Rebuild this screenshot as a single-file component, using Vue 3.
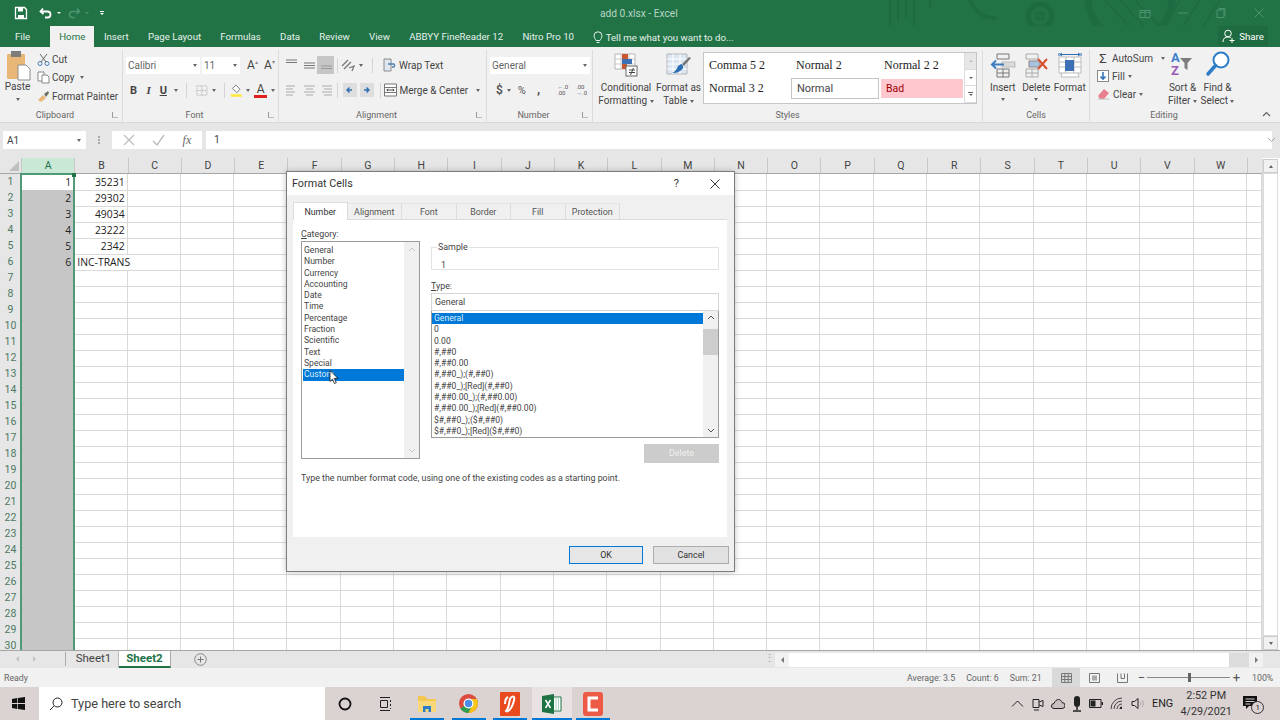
<script setup>
const tabs = ['Insert', 'Page Layout', 'Formulas', 'Data', 'Review', 'View', 'ABBYY FineReader 12', 'Nitro Pro 10']
const cols = 'ABCDEFGHIJKLMNOPQRSTUVW'.split('')
const rows = Array.from({ length: 30 }, (_, i) => i + 1)
const valoresB = { 1: '35231', 2: '29302', 3: '49034', 4: '23222', 5: '2342' }
const categorias = ['General', 'Number', 'Currency', 'Accounting', 'Date', 'Time', 'Percentage', 'Fraction', 'Scientific', 'Text', 'Special', 'Custom']
const formatos = ['General', '0', '0.00', '#,##0', '#,##0.00', '#,##0_);(#,##0)', '#,##0_);[Red](#,##0)', '#,##0.00_);(#,##0.00)', '#,##0.00_);[Red](#,##0.00)', '$#,##0_);($#,##0)', '$#,##0_);[Red]($#,##0)']
const dlgTabs = ['Number', 'Alignment', 'Font', 'Border', 'Fill', 'Protection']
</script>

<template>
  <div class="app">
    <!-- barra de titulo -->
    <div class="titlebar">
      <svg class="pattern" width="400" height="47" viewBox="0 0 400 47">
        <g fill="none" stroke="#1d6b40" stroke-width="2">
          <path d="M10 0v26M18 0v22M26 0v18M34 0v26M50 0v8" />
          <circle cx="160" cy="16" r="12" stroke-width="5" />
          <circle cx="160" cy="16" r="3" />
          <circle cx="250" cy="-2" r="42" stroke-width="7" />
          <path d="M225 0l40 44M240 0l40 44M255 0l30 32M300 0l-30 47M320 0l-30 47M340 0l-30 47" stroke-width="1.5" />
          <path d="M90 0c4 12 14 18 26 18" stroke-width="4" />
        </g>
      </svg>
      <div class="qat">
        <svg width="14" height="14" viewBox="0 0 14 14"><path d="M1.5 1.5h9l2 2v9h-11z" fill="none" stroke="#fff" stroke-width="1.3" /><path d="M4 1.5h5v4H4zM4 9h6v3.5H4z" fill="#fff" /></svg>
        <svg width="14" height="12" viewBox="0 0 14 12" class="undo"><path d="M4 1.5L1.5 4.5 4.5 7M2 4.5h6.5a3 3 0 0 1 0 6H6" fill="none" stroke="#fff" stroke-width="1.8" /></svg>
        <i class="caret white small"></i>
        <svg width="14" height="12" viewBox="0 0 14 12" class="redo"><path d="M10 1.5l2.5 3L9.5 7M12 4.5H5.5a3 3 0 0 0 0 6H8" fill="none" stroke="#4d9470" stroke-width="1.6" /></svg>
        <i class="caret dim small"></i>
        <div class="custom"><b></b><i class="caret white small"></i></div>
      </div>
      <span class="doc">add 0.xlsx - Excel</span>
      <div class="winbtns">
        <svg width="12" height="10" viewBox="0 0 12 10"><path d="M1 2.5h10v7H1zM1 4.500h10M6 2.500v7" fill="none" stroke="#4d9470" /></svg>
        <svg width="12" height="10" viewBox="0 0 12 10"><path d="M1 5h10" stroke="#4d9470" /></svg>
        <svg width="12" height="10" viewBox="0 0 12 10"><path d="M2 2h7v7.500H2zM4 2V.5h6v7H9" fill="none" stroke="#4d9470" /></svg>
        <svg width="12" height="10" viewBox="0 0 12 10"><path d="M1.500 0.500l9 9M10.500 0.500l-9 9" stroke="#4d9470" /></svg>
      </div>
    </div>
    <div class="tabbar">
      <span class="tab file">File</span>
      <span class="tab home">Home</span>
      <span v-for="t in tabs" :key="t" class="tab">{{ t }}</span>
      <span class="tell">
        <svg width="10" height="13" viewBox="0 0 10 13"><path d="M3 9.500C2.500 8 1 7 1 4.800a4 4 0 0 1 8 0C9 7 7.500 8 7 9.500zM3.500 11.500h3" fill="none" stroke="#e5f0ea" /></svg>
        Tell me what you want to do...
      </span>
      <span class="share">
        <svg width="14" height="14" viewBox="0 0 14 14"><circle cx="6" cy="4.500" r="3.300" fill="none" stroke="#fff" /><path d="M1 13c0-3.500 2-5 5-5 1 0 2 .2 2.800.7M10 9v5M7.500 11.500h5" fill="none" stroke="#fff" /></svg>
        Share
      </span>
    </div>

    <!-- cinta -->
    <div class="ribbon">
      <section class="grp clipboard">
        <div class="grp-body cb">
          <div class="paste">
            <svg width="26" height="34" viewBox="0 0 26 34"><rect x="1" y="4" width="18" height="25" rx="1" fill="#e8b778" /><rect x="5" y="1" width="10" height="6" fill="#7d7d7d" /><path d="M12 15h8l4 4v11H12z" fill="#fff" stroke="#8c8c8c" /></svg>
            <span>Paste</span>
            <i class="caret"></i>
          </div>
          <div class="cb-list">
            <div><svg width="13" height="13" viewBox="0 0 13 13"><circle cx="3" cy="10.500" r="2" fill="none" stroke="#4b7fb5" /><circle cx="10" cy="10.500" r="2" fill="none" stroke="#4b7fb5" /><path d="M4 9L10 1M9 9L3 1" stroke="#666" fill="none" /></svg>Cut</div>
            <div><svg width="13" height="13" viewBox="0 0 13 13"><path d="M1 1h6v9H1z" fill="#fff" stroke="#888" /><path d="M5 4h5l2 2v6H5z" fill="#fff" stroke="#888" /></svg>Copy <i class="caret mleft"></i></div>
            <div><svg width="13" height="13" viewBox="0 0 13 13"><path d="M1 10l5-5 3 3-5 4z" fill="#e8b778" /><path d="M7 4l4-3 1 2-3 4z" fill="#6e6e6e" /></svg>Format Painter</div>
          </div>
        </div>
        <div class="grp-label con">Clipboard<i class="launcher"></i></div>
      </section>

      <section class="grp font">
        <div class="grp-body stack">
          <div class="r r1">
            <div class="combo w74">Calibri<i class="caret"></i></div>
            <div class="combo w38">11<i class="caret"></i></div>
            <span class="big-a a1">A<sup>▴</sup></span>
            <span class="big-a">A<sup>▾</sup></span>
          </div>
          <div class="r r2">
            <b class="fmt w18">B</b><em class="fmt w17">I</em><u class="fmt w15">U</u><i class="caret m3"></i>
            <i class="sep"></i>
            <svg class="bordes" width="14" height="13" viewBox="0 0 14 13"><path d="M1 1h12v11H1zM1 6.500h12M7 1v11" fill="none" stroke="#b5b5b5" stroke-dasharray="2 1" /></svg>
            <i class="caret m3"></i>
            <i class="sep"></i>
            <svg width="15" height="15" viewBox="0 0 15 15"><path d="M7 1l5 5-4 4-5-5z" fill="#fff" stroke="#666" /><rect x="1" y="12" width="13" height="3" fill="#ffe93b" /></svg>
            <i class="caret m3"></i>
            <span class="colora">A</span>
            <i class="caret m3"></i>
          </div>
        </div>
        <div class="grp-label con">Font<i class="launcher"></i></div>
      </section>

      <section class="grp align">
        <div class="grp-body stack">
          <div class="r r1 ar">
            <svg class="al" width="14" height="14" viewBox="0 0 14 14"><path d="M2 2h11M2 4.500h11" stroke="#777" /></svg>
            <svg class="al" width="14" height="14" viewBox="0 0 14 14"><path d="M2 5h11M2 7.500h11M2 10h11" stroke="#777" /></svg>
            <span class="al on"><svg width="14" height="14" viewBox="0 0 14 14"><path d="M2 8h11M2 10.500h11" stroke="#999" /></svg></span>
            <i class="sep s2"></i>
            <svg width="14" height="14" viewBox="0 0 14 14"><path d="M1 8l6-6M3 11l7-7M8 10l5-2-2 5" fill="none" stroke="#777" stroke-width="1.300" /></svg>
            <i class="caret m3"></i>
            <i class="sep s3"></i>
            <svg width="13" height="14" viewBox="0 0 13 14"><path d="M1 1h7v12H1z" fill="#dfe7f1" stroke="#8a8a8a" /><path d="M5 6h6a2 2 0 0 1 0 3H9" fill="none" stroke="#4b7fb5" stroke-width="1.300" /></svg>
            <span class="txt">Wrap Text</span>
          </div>
          <div class="r r2 ar">
            <svg class="al" width="14" height="14" viewBox="0 0 14 14"><path d="M2 3h9M2 6h7M2 9h9M2 12h7" stroke="#c2c2c2" stroke-width="1.500" /></svg>
            <svg class="al" width="14" height="14" viewBox="0 0 14 14"><path d="M2 3h11M4 6h7M2 9h11M4 12h7" stroke="#c2c2c2" stroke-width="1.500" /></svg>
            <svg class="al" width="14" height="14" viewBox="0 0 14 14"><path d="M3 3h10M5 6h8M3 9h10M5 12h8" stroke="#c2c2c2" stroke-width="1.500" /></svg>
            <i class="sep s4"></i>
            <svg class="ind" width="14" height="14" viewBox="0 0 14 14"><rect width="14" height="14" fill="#dedede" /><path d="M9 7H4M6.500 4.500L4 7l2.500 2.500" fill="none" stroke="#2d6db3" stroke-width="1.400" /></svg>
            <svg class="ind" width="14" height="14" viewBox="0 0 14 14"><rect width="14" height="14" fill="#dedede" /><path d="M4 7h5M6.500 4.500L9 7 6.500 9.500" fill="none" stroke="#2d6db3" stroke-width="1.400" /></svg>
            <i class="sep s5"></i>
            <svg width="13" height="14" viewBox="0 0 13 14"><path d="M.5 1h12v12H.5zM.5 4.500h12M.5 9.500h12" fill="#fff" stroke="#777" /><path d="M3 7h7M4 5.800L2.800 7 4 8.200M9 5.800L10.200 7 9 8.200" fill="none" stroke="#444" /></svg>
            <span class="txt">Merge &amp; Center</span>
            <i class="caret m8"></i>
          </div>
        </div>
        <div class="grp-label con">Alignment<i class="launcher"></i></div>
      </section>

      <section class="grp number">
        <div class="grp-body stack">
          <div class="r r1"><div class="combo w100">General<i class="caret"></i></div></div>
          <div class="r r2 nr">
            <span class="dollar">$</span><i class="caret m3"></i>
            <span class="pct">%</span>
            <span class="comma">,</span>
            <i class="sep s6"></i>
            <span class="dec"><u>←</u>.0<br />.00</span>
            <span class="dec">.00<br /><u>→</u>.0</span>
          </div>
        </div>
        <div class="grp-label con">Number<i class="launcher"></i></div>
      </section>

      <section class="grp styles">
        <div class="grp-body st">
          <div class="bigbtn w57">
            <svg width="24" height="24" viewBox="0 0 24 24"><path d="M1 1h20v15H1z" fill="#fff" stroke="#b5b5b5" /><path d="M1 6h20M1 11h20M7 1v15M15 1v15" stroke="#c9c9c9" /><rect x="8" y="1" width="6" height="5" fill="#c8562e" /><rect x="8" y="6" width="10" height="5" fill="#3e70b5" /><rect x="8" y="11" width="5" height="5" fill="#c8562e" /><rect x="12" y="13" width="11" height="10" fill="#fff" stroke="#666" /><path d="M15 17h6M15 19.500h6M19.500 15l-3 7" stroke="#444" /></svg>
            <span>Conditional</span><span>Formatting <i class="caret"></i></span>
          </div>
          <div class="bigbtn w50">
            <svg width="26" height="24" viewBox="0 0 26 24"><path d="M1 1h20v20H1z" fill="#dbe6f3" stroke="#b5b5b5" /><path d="M1 6h20M1 11h20M1 16h20M7 1v20M14 1v20" stroke="#fff" /><path d="M25 5l-7 8-2-2 7-7z" fill="#777" /><path d="M15 11c3 1 3 5-1 7-3 2-6 2-8 2 3-1 5-4 6-7z" fill="#2d6db3" /></svg>
            <span>Format as</span><span>Table <i class="caret"></i></span>
          </div>
          <div class="gallery">
            <div class="gal-grid">
              <span class="ser">Comma 5 2</span><span class="ser">Normal 2</span><span class="ser">Normal 2 2</span>
              <span class="ser">Normal 3 2</span><span class="norm">Normal</span><span class="bad">Bad</span>
            </div>
            <div class="gal-scroll">
              <span class="off"><i class="caret up"></i></span><span><i class="caret"></i></span><span class="more"><b></b><i class="caret"></i></span>
            </div>
          </div>
        </div>
        <div class="grp-label">Styles</div>
      </section>

      <section class="grp cells">
        <div class="grp-body cl">
          <div class="cellbtn">
            <svg width="26" height="26" viewBox="0 0 26 26"><path d="M7 2h12v5H7zM7 17h12v8H7zM13 17v8M7 21h12" fill="none" stroke="#777" /><rect x="12" y="10" width="13" height="5" fill="#dadada" stroke="#bbb" /><path d="M14 12.500H2M6 8.500l-4 4 4 4" fill="none" stroke="#3f7dbd" stroke-width="2" /></svg>
            <span>Insert</span><i class="caret"></i>
          </div>
          <div class="cellbtn">
            <svg width="26" height="26" viewBox="0 0 26 26"><path d="M3 2h12v5H3zM3 17h12v8H3zM9 17v8M3 21h12" fill="none" stroke="#aaa" /><rect x="6" y="9" width="11" height="6" fill="#a9c4e0" stroke="#888" /><path d="M15 7l9 10M24 7l-9 10" stroke="#d9502e" stroke-width="2" /></svg>
            <span>Delete</span><i class="caret"></i>
          </div>
          <div class="cellbtn">
            <svg width="24" height="26" viewBox="0 0 24 26"><path d="M1 5h22v16H1zM1 10h22M1 15h22M8 5v16M16 5v16M4 21l-1 4h18l-1-4" fill="#fff" stroke="#bbb" /><rect x="7" y="8" width="9" height="11" fill="#3e70b5" /><path d="M1 1v3M23 1v3M2 2.500h20M4 1L2 2.500 4 4M20 1l2 1.500L20 4" fill="none" stroke="#2d6db3" /></svg>
            <span>Format</span><i class="caret"></i>
          </div>
        </div>
        <div class="grp-label">Cells</div>
      </section>

      <section class="grp editing">
        <div class="grp-body ed">
          <div class="ed-list">
            <div><span class="sigma">Σ</span>AutoSum <i class="caret mleft2"></i></div>
            <div><svg width="12" height="12" viewBox="0 0 12 12"><rect x=".5" y=".5" width="11" height="11" fill="#fff" stroke="#888" /><path d="M6 2v7M3.500 6.500L6 9.200 8.500 6.500" fill="none" stroke="#2d6db3" stroke-width="1.500" /></svg>Fill <i class="caret"></i></div>
            <div><svg width="13" height="12" viewBox="0 0 13 12"><path d="M1 8l6-7 5 4-5 6H3z" fill="#e8808f" /><path d="M1 11h11" stroke="#bbb" /></svg>Clear <i class="caret"></i></div>
          </div>
          <div class="bigbtn w35 sort">
            <svg width="26" height="26" viewBox="0 0 26 26">
              <text x="1" y="11" class="az a">A</text><text x="1" y="24" class="az z">Z</text>
              <path d="M10 7h12l-4.500 5v7l-3-2v-5z" fill="#7d7d7d" />
            </svg>
            <span>Sort &amp;</span><span>Filter <i class="caret"></i></span>
          </div>
          <div class="bigbtn w35 find">
            <svg width="26" height="26" viewBox="0 0 26 26"><circle cx="16" cy="9" r="7.500" fill="#fff" stroke="#2d7cc7" stroke-width="2" /><path d="M10.500 14.500L3 23" stroke="#2d7cc7" stroke-width="3.500" stroke-linecap="round" /></svg>
            <span>Find &amp;</span><span>Select <i class="caret"></i></span>
          </div>
        </div>
        <div class="grp-label">Editing</div>
      </section>
      <svg class="collapse" width="9" height="6" viewBox="0 0 9 6"><path d="M1 5l3.500-3.500L8 5" fill="none" stroke="#666" stroke-width="1.200" /></svg>
    </div>

    <!-- barra de formulas -->
    <div class="fbar">
      <div class="namebox">A1<i class="caret"></i></div>
      <div class="grip"></div>
      <div class="fbtns">
        <svg width="12" height="12" viewBox="0 0 12 12"><path d="M1 1l10 10M11 1L1 11" stroke="#bdbdbd" stroke-width="1.200" /></svg>
        <svg width="13" height="12" viewBox="0 0 13 12"><path d="M1 7l4 4 7-10" fill="none" stroke="#bdbdbd" stroke-width="1.400" /></svg>
        <span class="fx">fx</span>
      </div>
      <div class="finput">1</div>
      <svg class="fdown" width="9" height="6" viewBox="0 0 9 6"><path d="M1 1l3.500 3.500L8 1" fill="none" stroke="#a8a8a8" /></svg>
    </div>

    <!-- hoja -->
    <div class="sheet">
      <div class="grid">
        <div class="hdr">
          <div class="corner"><i></i></div>
          <div v-for="c in cols" :key="c" class="colh" :class="{ act: c === 'A' }">{{ c }}</div>
          <div class="colh"></div>
        </div>
        <div v-for="r in rows" :key="r" class="row">
          <div class="rowh">{{ r }}</div>
          <div class="cell num" :class="{ gris: r > 1 }"><template v-if="r <= 6">{{ r }}</template></div>
          <div class="cell num b" :class="{ largo: r === 6 }">{{ r === 6 ? 'INC-TRANS' : valoresB[r] }}</div>
          <div v-for="c in cols.slice(2)" :key="c" class="cell"></div>
          <div class="cell"></div>
        </div>
        <div class="selbox"><i></i></div>
      </div>
      <div class="vscroll">
        <span><i class="caret up"></i></span>
        <b></b>
        <span><i class="caret"></i></span>
      </div>
    </div>

    <!-- pestañas de hojas -->
    <div class="sheetbar">
      <div class="navs"><i class="tri l"></i><i class="tri r"></i></div>
      <div class="stab">Sheet1</div>
      <div class="stab on">Sheet2</div>
      <svg class="plus" width="13" height="13" viewBox="0 0 13 13"><circle cx="6.500" cy="6.500" r="5.800" fill="none" stroke="#888" /><path d="M6.500 3.500v6M3.500 6.500h6" stroke="#777" /></svg>
      <div class="dots">⋮</div>
      <div class="hscroll">
        <span class="h-end"><i class="tri l dark"></i></span>
        <b></b>
        <span class="h-end"><i class="tri r dark"></i></span>
      </div>
    </div>

    <!-- barra de estado -->
    <div class="status">
      <span class="ready">Ready</span>
      <div class="stats"><span>Average: 3.5</span><span>Count: 6</span><span>Sum: 21</span></div>
      <div class="views">
        <span class="on"><svg width="11" height="10" viewBox="0 0 11 10"><path d="M.5.500h10v9H.5zM.5 3.500h10M.5 6.500h10M3.800.500v9M7.200.500v9" fill="none" stroke="#777" /></svg></span>
        <span><svg width="11" height="10" viewBox="0 0 11 10"><path d="M.5.500h10v9H.5z" fill="none" stroke="#777" /><rect x="3" y="2.500" width="5" height="5" fill="#aaa" /></svg></span>
        <span><svg width="11" height="10" viewBox="0 0 11 10"><path d="M.5.500v9h10v-9M4 .500v5h3.500v-5" fill="none" stroke="#777" /></svg></span>
      </div>
      <div class="zoom">
        <span class="zb">−</span>
        <div class="slider"><i></i></div>
        <span class="zb">+</span>
      </div>
      <span class="pc">100%</span>
    </div>

    <!-- barra de tareas -->
    <div class="taskbar">
      <div class="start">
        <svg width="13" height="13" viewBox="0 0 13 13"><path d="M0 1.900L5.300 1.100V6H0zM6 1L13 0V6H6zM0 7h5.300v4.900L0 11.100zM6 7h7v6L6 12z" fill="#111" /></svg>
      </div>
      <div class="search">
        <svg width="14" height="14" viewBox="0 0 14 14"><circle cx="8.500" cy="5.500" r="4.500" fill="none" stroke="#222" /><path d="M5.200 8.800L1 13" stroke="#222" /></svg>
        <span>Type here to search</span>
      </div>
      <div class="tb-app plain"><svg width="14" height="14" viewBox="0 0 14 14"><circle cx="7" cy="7" r="5.500" fill="none" stroke="#111" stroke-width="1.800" /></svg></div>
      <div class="tb-app plain"><svg width="14" height="14" viewBox="0 0 14 14"><path d="M2 .500h10M2 13.500h10M2.500 3.500h7v7h-7zM12.500 3v2M12.500 7v2M12.500 11v1" fill="none" stroke="#222" /></svg></div>
      <div class="apps">
        <div class="tb-app run"><svg width="18" height="18" viewBox="0 0 18 18"><path d="M0 1h7l2 3h9v13H0z" fill="#f3c850" /><rect y="6" width="18" height="11" fill="#f8d878" /><path d="M5 17v-6h8v6h-2.500v-3h-3v3z" fill="#2d7cc7" /></svg></div>
        <div class="tb-app run"><svg width="19" height="19" viewBox="0 0 19 19"><circle cx="9.500" cy="9.500" r="9.500" fill="#dd4b3e" /><path d="M9.500 9.500L1.300 14.200A9.500 9.500 0 0 0 9.500 19l4.600-8z" fill="#2f9e4f" /><path d="M9.500 5h8.200a9.500 9.500 0 0 1-8.200 14l4.600-9.500z" fill="#f5c518" /><circle cx="9.500" cy="9.500" r="4.400" fill="#4a8ce8" stroke="#fff" stroke-width="1.300" /></svg></div>
        <div class="tb-app run"><svg width="20" height="24" viewBox="0 0 20 24"><rect width="20" height="24" rx="1" fill="#e8491d" /><path d="M6 19c3-3 3-8 4-12 1-2 3-3 4-2s-1 8-3 11-4 4-5 3zM5 12c0-3 1-6 3-7" fill="none" stroke="#fff" stroke-width="2" /></svg></div>
        <div class="tb-app run act"><svg width="20" height="20" viewBox="0 0 20 20"><path d="M12 3h7v14h-7" fill="#fff" stroke="#1f7244" /><path d="M14 3v14M16.500 3v14" stroke="#a9cdb8" /><path d="M0 2l12-2v20L0 18z" fill="#1f7244" /><path d="M3.500 6l5 8M8.500 6l-5 8" stroke="#fff" stroke-width="1.500" /></svg></div>
        <div class="tb-app run"><svg width="20" height="24" viewBox="0 0 20 24"><rect width="20" height="24" rx="3" fill="#ed5a45" /><path d="M15 6H6v12h9" fill="none" stroke="#fff" stroke-width="3" /></svg></div>
      </div>
      <div class="tray">
        <svg width="13" height="7" viewBox="0 0 13 7"><path d="M1 6.500l5.500-5.500L12 6.500" fill="none" stroke="#222" /></svg>
        <svg width="13" height="14" viewBox="0 0 13 14"><path d="M2 2.500h6v8H2zM8 5l4-1.500v6L8 8M3 13h5" fill="none" stroke="#222" /></svg>
        <svg width="14" height="10" viewBox="0 0 14 10"><path d="M3 9.500a2.500 2.500 0 0 1 0-5C4 2 5.500.500 7.500.500c2 0 3 1.500 3.500 3a3 3 0 0 1 0 6z" fill="#c8c0bf" stroke="#222" /></svg>
        <svg width="10" height="16" viewBox="0 0 10 16"><rect x="2" y="0" width="6" height="11" rx="3" fill="#222" /><path d="M5 11v3M1 15h8" stroke="#222" stroke-width="1.500" /></svg>
        <svg width="14" height="9" viewBox="0 0 14 9"><path d="M.5.500h11.500v8H.5z" fill="none" stroke="#222" /><rect x="1.500" y="1.500" width="5" height="6" fill="#222" /><rect x="12.500" y="3" width="1.500" height="3" fill="#222" /></svg>
        <svg width="14" height="13" viewBox="0 0 14 13"><path d="M1 12a11 11 0 0 1 11-11M4 12a8 8 0 0 1 8-8M7 12a5 5 0 0 1 5-5" fill="none" stroke="#444" /><path d="M9.500 12a2.500 2.500 0 0 1 2.500-2.500V12z" fill="#222" /></svg>
        <svg width="14" height="13" viewBox="0 0 14 13"><path d="M1 4.500h2.500L7 1.500v10l-3.500-3H1z" fill="none" stroke="#222" /><path d="M9 4.500a3 3 0 0 1 0 4M11 3a5 5 0 0 1 0 7" fill="none" stroke="#aaa" /></svg>
        <span class="eng">ENG</span>
        <div class="clock"><span>2:52 PM</span><span>4/29/2021</span></div>
        <div class="notif">
          <svg width="14" height="13" viewBox="0 0 14 13"><path d="M0 0h14v10H6l-3 3v-3H0z" fill="#111" /><path d="M2.500 3h9M2.500 5.500h9M2.500 8h5" stroke="#d6cfce" /></svg>
          <span>1</span>
        </div>
      </div>
    </div>

    <!-- dialogo -->
    <div class="dialog">
      <div class="dlg-title">
        <span>Format Cells</span>
        <span class="q">?</span>
        <svg width="10" height="10" viewBox="0 0 10 10"><path d="M.5.500l9 9M9.500.500l-9 9" stroke="#333" /></svg>
      </div>
      <div class="dlg-tabs">
        <span v-for="(t, i) in dlgTabs" :key="t" :class="{ on: i === 0 }">{{ t }}</span>
      </div>
      <div class="dlg-panel">
        <div class="dlg-cols">
          <div class="cat">
            <label><u>C</u>ategory:</label>
            <div class="catbox">
              <div class="catlist">
                <div v-for="c in categorias" :key="c" class="li" :class="{ sel: c === 'Custom' }">{{ c }}</div>
              </div>
              <div class="sb off">
                <svg width="8" height="5" viewBox="0 0 8 5"><path d="M1 4l3-3 3 3" fill="none" stroke="#c8c8c8" /></svg>
                <svg width="8" height="5" viewBox="0 0 8 5"><path d="M1 1l3 3 3-3" fill="none" stroke="#c8c8c8" /></svg>
              </div>
            </div>
          </div>
          <div class="der">
            <fieldset class="sample">
              <legend>Sample</legend>
              <div>1</div>
            </fieldset>
            <label class="tl"><u>T</u>ype:</label>
            <div class="tinput">General</div>
            <div class="tbox">
              <div class="tlist">
                <div v-for="(f, i) in formatos" :key="f" class="li" :class="{ sel: i === 0 }">{{ f }}</div>
              </div>
              <div class="sb">
                <svg width="8" height="5" viewBox="0 0 8 5"><path d="M1 4l3-3 3 3" fill="none" stroke="#555" /></svg>
                <b></b>
                <svg class="abajo" width="8" height="5" viewBox="0 0 8 5"><path d="M1 1l3 3 3-3" fill="none" stroke="#555" /></svg>
              </div>
            </div>
            <div class="delrow"><span class="del">Delete</span></div>
          </div>
        </div>
        <p class="desc">Type the number format code, using one of the existing codes as a starting point.</p>
      </div>
      <div class="dlg-foot">
        <span class="btn ok">OK</span>
        <span class="btn">Cancel</span>
      </div>
    </div>

    <svg class="cursor" width="10" height="14" viewBox="0 0 10 14"><path d="M1 .500v11l2.500-2.300L5.500 13.500l1.800-.8-2-4.300H9z" fill="#fff" stroke="#111" stroke-width=".8" /></svg>
  </div>
</template>

<style scoped>
.app { position: relative; width: 1280px; height: 720px; overflow: hidden; display: flex; flex-direction: column; background: #f1f1f1; color: #444; font-family: Roboto, "Open Sans", sans-serif; font-size: 10px; }
.caret { display: inline-block; width: 0; height: 0; border-left: 2.5px solid transparent; border-right: 2.5px solid transparent; border-top: 3px solid #666; vertical-align: middle; }
.caret.up { border-top: 0; border-bottom: 3px solid #666; }
.caret.white { border-top-color: #fff; }
.caret.dim { border-top-color: #4d9470; }
.caret.small { border-left-width: 2px; border-right-width: 2px; border-top-width: 2.5px; }

.titlebar { position: relative; height: 26px; background: #217346; color: #cfe3d8; display: flex; align-items: center; flex: none; }
.pattern { position: absolute; right: 0; top: 0; z-index: 0; }
.qat { display: flex; align-items: center; padding-left: 14px; position: relative; }
.undo { margin-left: 11px; }
.qat .caret { margin-left: 4px; }
.redo { margin-left: 6px; }
.custom { margin-left: 11px; display: flex; flex-direction: column; align-items: center; gap: 1px; }
.custom b { width: 4px; height: 1px; background: #fff; }
.custom .caret { margin: 0; }
.doc { position: absolute; left: 600px; top: 8px; font-size: 10.200px; color: #b8d4c5; }
.winbtns { position: absolute; right: 15px; top: 8px; display: flex; gap: 26px; }

.tabbar { position: relative; height: 21px; background: #217346; display: flex; align-items: center; flex: none; color: #e5f0ea; font-size: 9.700px; padding-left: 5px; }
.tab { padding: 0 9.600px; line-height: 22px; white-space: nowrap; }
.tab.file { padding: 0 10px; }
.tab.home { background: #f1f1f1; color: #217346; height: 21px; margin-left: 10px; padding: 0 9px; }
.tell { margin-left: 9px; display: flex; align-items: center; gap: 3px; white-space: nowrap; padding-top: 1px; }
.share { position: absolute; left: 1218px; top: 0; width: 50px; height: 20px; background: #1f6b41; color: #fff; display: flex; align-items: center; justify-content: center; gap: 3px; }

.ribbon { position: relative; flex: none; height: 75px; background: #f1f1f1; display: flex; }
.grp { display: flex; flex-direction: column; border-right: 1px solid #dcdcdc; position: relative; margin-top: 3px; height: 72px; box-sizing: border-box; flex: none; white-space: nowrap; }
.grp-body { height: 58px; flex: none; }
.grp-label { height: 14px; line-height: 14px; text-align: center; font-size: 9px; color: #666; position: relative; box-sizing: border-box; }
.grp-label.con { padding-right: 12px; }
.launcher { position: absolute; right: 4px; top: 4px; width: 5px; height: 5px; border-left: 1px solid #999; border-bottom: 1px solid #bbb; }
.clipboard { width: 123px; }
.font { width: 156px; }
.align { width: 208px; }
.number { width: 106px; }
.styles { width: 390px; }
.cells { width: 107px; }
.editing { width: 148px; border-right: 0; }
.cb { display: flex; }
.paste { width: 35px; display: flex; flex-direction: column; align-items: center; }
.paste svg { margin-left: 3px; }
.paste span { line-height: 11px; margin-top: -3px; }
.paste .caret { margin-top: 6px; }
.cb-list { display: flex; flex-direction: column; margin-left: 2px; }
.cb-list div { height: 18.500px; display: flex; align-items: center; gap: 2px; }
.mleft { margin-left: 3px; }
.stack { display: flex; flex-direction: column; padding: 6px 0 0 3px; box-sizing: border-box; }
.r { display: flex; align-items: center; }
.r1 { height: 18px; }
.r2 { height: 18px; margin-top: 7px; }
.combo { height: 17px; background: #fff; display: flex; align-items: center; justify-content: space-between; padding: 0 3px 0 2px; box-sizing: border-box; margin-right: 2px; color: #666; font-size: 10px; }
.w74 { width: 74px; } .w38 { width: 38px; } .w100 { width: 100px; }
.big-a { font-size: 12px; width: 17px; text-align: center; }
.a1 { margin-left: 2px; }
.big-a sup { font-size: 6px; line-height: 0; color: #888; }
.fmt { text-align: center; font-size: 11px; font-family: "Liberation Serif", serif; color: #444; }
.r2 b.fmt, .r2 u.fmt { font-family: Roboto, sans-serif; font-weight: 700; }
.w18 { width: 18px; margin-left: 0; } .w17 { width: 18px; font-weight: 700; } .w15 { width: 17px; }
.m3 { margin: 0 3px 0 4px; }
.sep { width: 1px; height: 15px; background: #d4d4d4; margin: 0 5px; }
.bordes { margin-left: 4px; }
.colora { position: relative; width: 15px; height: 15px; text-align: center; font-size: 12px; line-height: 12px; color: #444; border-bottom: 3px solid #e01e1e; box-sizing: border-box; margin-left: 1px; }
.ar { padding-left: 2px; }
.al { width: 14px; margin-right: 3.500px; }
.al.on { width: 17px; height: 18px; background: #c6c6c6; margin-right: 0; display: flex; align-items: center; justify-content: center; margin-left: -2px; }
.s2 { margin: 0 3px 0 3px; }
.s3 { margin: 0 10px 0 6px; }
.s4 { margin: 0 5px 0 0; }
.ind { margin-right: 3px; }
.s5 { margin: 0 3px 0 3px; }
.txt { margin-left: 3px; }
.m8 { margin-left: 8px; }
.nr { padding-left: 6px; color: #555; }
.dollar { font-size: 12px; font-weight: 600; }
.pct { font-size: 11px; margin-left: 4px; }
.comma { font-size: 13px; font-weight: 700; margin-left: 11px; line-height: 10px; }
.s6 { margin: 0 8px 0 9px; }
.dec { font-size: 6px; line-height: 6px; margin-right: 8px; }
.dec u { text-decoration: none; color: #2d6db3; }
.st { display: flex; }
.bigbtn { display: flex; flex-direction: column; align-items: center; line-height: 13px; }
.bigbtn svg { margin: 3px 0 4px; height: 24px; }
.bigbtn span { white-space: nowrap; }
.w57 { width: 56px; margin-left: 5px; }
.w50 { width: 49px; }
.gallery { margin-top: 2px; height: 52px; width: 274px; background: #fff; border: 1px solid #c6c6c6; box-sizing: border-box; display: flex; }
.gal-grid { flex: 1; display: grid; grid-template-columns: 87px 88px 85px; grid-template-rows: 24px 22px; align-items: center; }
.gal-grid span { padding-left: 5px; }
.gal-grid .ser { font-family: "Liberation Serif", serif; color: #222; font-size: 12px; }
.gal-grid .norm { border: 1.500px solid #c4c4c4; height: 21px; line-height: 19px; box-sizing: border-box; color: #444; font-size: 11px; background: #fff; }
.gal-grid .bad { background: #ffc7ce; color: #9c0006; height: 19px; line-height: 19px; font-size: 10.500px; margin: 0 1px 0 2px; }
.gal-scroll { width: 11px; display: flex; flex-direction: column; border-left: 1px solid #dcdcdc; }
.gal-scroll span { flex: 1; display: flex; flex-direction: column; align-items: center; justify-content: center; gap: 1px; border-bottom: 1px solid #dcdcdc; background: #fff; }
.gal-scroll .off { background: #e6e6e6; }
.gal-scroll b { width: 5px; height: 1px; background: #666; }
.gal-scroll .caret { border-left-width: 2px; border-right-width: 2px; border-top-width: 2px; }
.gal-scroll .caret.up { border-bottom-width: 2px; border-top-width: 0; border-bottom-color: #bbb; }
.cl { display: flex; padding-left: 3px; }
.cellbtn { width: 33.500px; display: flex; flex-direction: column; align-items: center; line-height: 13px; }
.cellbtn svg { height: 26px; margin: 2px 0 3px; }
.cellbtn .caret { margin-top: 4px; }
.ed { display: flex; }
.ed-list { width: 75px; display: flex; flex-direction: column; margin-top: -1px; padding-left: 7px; box-sizing: border-box; }
.ed-list div { height: 18px; display: flex; align-items: center; gap: 3px; white-space: nowrap; }
.sigma { width: 12px; font-size: 13px; text-align: center; color: #444; }
.mleft2 { margin-left: 5px; }
.w35 { width: 35px; }
.bigbtn.sort svg, .bigbtn.find svg { height: 26px; margin: 1px 0 4px; }
.az { font-size: 13px; font-weight: 700; font-family: Roboto, sans-serif; }
.az.a { fill: #3d7fc8; }
.az.z { fill: #9b59b6; }
.collapse { position: absolute; right: 9px; top: 64px; }

.fbar { position: relative; flex: none; height: 36px; background: #e6e6e6; border-top: 1px solid #d8d8d8; box-sizing: border-box; display: flex; padding: 8px 0 0 3px; color: #444; }
.namebox { width: 83px; height: 18px; background: #fff; box-sizing: border-box; display: flex; align-items: center; justify-content: space-between; padding: 0 5px 0 4px; }
.grip { width: 26px; height: 18px; position: relative; }
.grip::after { content: ""; position: absolute; left: 12px; top: 5px; width: 2px; height: 8px; background: repeating-linear-gradient(#aaa 0 2px, transparent 2px 3px); }
.fbtns { width: 90px; height: 18px; background: #fff; display: flex; align-items: center; justify-content: space-around; padding: 0 2px; box-sizing: border-box; }
.fx { font-family: "Liberation Serif", serif; font-style: italic; font-size: 12px; color: #666; }
.finput { margin-left: 4px; width: 1066px; height: 18px; line-height: 18px; background: #fff; padding-left: 8px; box-sizing: border-box; font-size: 10.500px; }
.fdown { position: absolute; right: 4px; top: 14px; }

.sheet { flex: 1; min-height: 0; display: flex; background: #fff; }
.grid { position: relative; width: 1263px; overflow: hidden; background: #fff; }
.hdr, .row { display: grid; grid-template-columns: 21px repeat(23, 53.300px) 1fr; }
.hdr { height: 16px; background: #e6e6e6; border-bottom: 1px solid #a6a6a6; box-sizing: border-box; }
.corner { position: relative; }
.corner i { position: absolute; right: 2px; bottom: 2px; width: 0; height: 0; border-left: 10px solid transparent; border-bottom: 10px solid #c0c0c0; }
.colh { text-align: center; line-height: 15px; border-left: 1px solid #c8c8c8; font-size: 10.500px; color: #444; }
.colh.act { background: #c9e8d6; color: #217346; }
.row { height: 16px; }
.rowh { background: #e6e6e6; color: #4c7a62; text-align: center; line-height: 16px; font-size: 10.500px; border-bottom: 1px solid #c8c8c8; box-sizing: border-box; }
.cell { border-right: 1px solid #d9d9d9; border-bottom: 1px solid #d9d9d9; box-sizing: border-box; min-width: 0; line-height: 16px; font-family: "Open Sans", sans-serif; font-size: 10.400px; color: #222; white-space: nowrap; }
.num { text-align: right; padding-right: 2px; }
.gris { background: #c6c6c6; border-color: #bcbcbc; }
.largo { text-align: left; padding-left: 3px; border-right-color: transparent; }
.selbox { position: absolute; left: 20px; top: 15px; bottom: -2px; width: 55px; border: 2px solid #4f9a75; box-sizing: border-box; pointer-events: none; }
.selbox i { position: absolute; right: -3px; top: -2px; width: 4px; height: 4px; background: #217346; }
.vscroll { width: 15px; margin: 1px 2px 0 0; display: flex; flex-direction: column; background: #f1f1f1; border-left: 1px solid #dcdcdc; box-sizing: content-box; }
.vscroll span { height: 14px; display: flex; align-items: center; justify-content: center; background: #f1f1f1; border: 1px solid #ccc; box-sizing: border-box; }
.vscroll b { flex: 1; background: #fff; border: 1px solid #ddd; }

.sheetbar { position: relative; flex: none; height: 18px; background: #e6e6e6; border-top: 1px solid #a6a6a6; box-sizing: border-box; display: flex; align-items: stretch; }
.navs { width: 66px; border-right: 1px solid #aaa; box-sizing: border-box; display: flex; align-items: center; gap: 14px; padding-left: 16px; margin: 1px 3px 2px 0; }
.tri { display: inline-block; width: 0; height: 0; border-top: 3px solid transparent; border-bottom: 3px solid transparent; }
.tri.l { border-right: 3px solid #c2c2c2; }
.tri.r { border-left: 3px solid #c2c2c2; }
.tri.dark.l { border-right-color: #777; }
.tri.dark.r { border-left-color: #777; }
.stab { width: 50px; text-align: center; line-height: 14px; font-size: 11.500px; color: #444; border-right: 1px solid #bbb; box-sizing: border-box; }
.stab.on { width: 52px; background: #fff; color: #217346; font-weight: 700; border-bottom: 2px solid #217346; border-right: 1px solid #aaa; height: 17px; }
.plus { margin: 2px 0 0 23px; }
.dots { position: absolute; left: 764px; top: 1px; color: #999; font-size: 11px; line-height: 14px; }
.hscroll { position: absolute; left: 775px; top: 2px; width: 488px; height: 14px; display: flex; background: #dcdcdc; }
.h-end { width: 14px; display: flex; align-items: center; justify-content: center; background: #f1f1f1; }
.hscroll b { width: 440px; background: #fff; }
.hscroll .h-end:last-child { margin-left: auto; }

.status { flex: none; height: 19px; background: #f1f1f1; display: flex; align-items: center; font-size: 8.800px; color: #666; padding-left: 4px; position: relative; }
.ready { width: 903px; }
.stats { display: flex; gap: 11px; width: 145px; }
.views { display: flex; height: 19px; }
.views span { width: 28px; display: flex; align-items: center; justify-content: center; }
.views .on { background: #d9d9d9; }
.zoom { display: flex; align-items: center; margin-left: 1px; }
.zb { font-size: 13px; width: 9px; text-align: center; color: #555; }
.slider { width: 83px; height: 1px; background: #888; margin: 0 2px 0 1px; position: relative; }
.slider i { position: absolute; left: 41px; top: -4px; width: 3px; height: 9px; background: #666; }
.pc { margin-left: 11px; }

.taskbar { position: relative; flex: none; height: 33px; background: #dbd3d2; display: flex; align-items: center; color: #222; }
.start { width: 39px; display: flex; justify-content: center; }
.start svg { margin-left: -3px; }
.search { width: 286px; height: 33px; background: #fff; display: flex; align-items: center; padding-left: 10px; box-sizing: border-box; font-size: 12.700px; color: #444; gap: 8px; }
.tb-app { display: flex; align-items: center; justify-content: center; height: 33px; box-sizing: border-box; position: relative; }
.plain { width: 40px; }
.apps { display: flex; margin-left: 2px; gap: 1.500px; }
.apps .tb-app { width: 40px; }
.run::after { content: ""; position: absolute; left: 3px; right: 3px; bottom: 0; height: 2px; background: #0078d7; }
.run.act::after { left: 0; right: 0; }
.apps .act { background: #e8e3e2; }
.tray { position: absolute; left: 1011px; top: 0; height: 33px; right: 0; display: flex; align-items: center; gap: 7px; }
.eng { font-size: 10.800px; }
.clock { display: flex; flex-direction: column; align-items: center; font-size: 10.800px; line-height: 16px; width: 52px; color: #333; }
.notif { position: relative; margin-left: 4px; }
.notif span { position: absolute; left: 8px; top: 5px; width: 11px; height: 11px; border-radius: 50%; border: 1px solid #333; background: #dbd3d2; font-size: 8px; line-height: 11px; text-align: center; }

.dialog { position: absolute; left: 286px; top: 171px; width: 449px; height: 401px; background: #f0f0f0; border: 1px solid #7c7c7c; box-sizing: border-box; box-shadow: 0 0 6px rgba(0, 0, 0, .25); display: flex; flex-direction: column; font-size: 8.900px; color: #444; }
.dlg-title { height: 23px; flex: none; background: #fff; display: flex; align-items: center; padding: 0 14px 0 5px; font-size: 10.800px; color: #333; }
.dlg-title span:first-child { flex: 1; }
.q { margin-right: 31px; font-size: 11px; }
.dlg-tabs { height: 24px; flex: none; display: flex; align-items: flex-end; padding-left: 6px; }
.dlg-tabs span { width: 54.500px; height: 16px; line-height: 16px; text-align: center; border-right: 1px solid #dcdcdc; border-top: 1px solid #e4e4e4; box-sizing: border-box; color: #555; }
.dlg-tabs span.on { height: 18px; line-height: 18px; background: #fff; border: 1px solid #dcdcdc; border-bottom: 0; color: #333; position: relative; top: 1px; }
.dlg-panel { width: 434px; height: 318px; flex: none; margin-left: 6px; background: #fff; border-top: 1px solid #dcdcdc; box-sizing: border-box; padding: 9px 7px 0 8px; display: flex; flex-direction: column; }
.dlg-cols { display: flex; gap: 11px; height: 231px; }
.cat { width: 119px; }
.cat label { display: block; height: 12px; line-height: 10px; }
.catbox { width: 119px; height: 218px; border: 1px solid #9b9b9b; box-sizing: border-box; display: flex; }
.catlist { flex: 1; padding: 3px 0 0 1px; }
.li { height: 11.300px; line-height: 11.300px; padding-left: 1px; white-space: nowrap; color: #444; font-size: 8.600px; }
.li.sel { background: #0078d7; color: #dcecf9; }
.sb { width: 15px; background: #f0f0f0; display: flex; flex-direction: column; align-items: center; justify-content: space-between; padding: 5px 0; box-sizing: border-box; }
.der { width: 288px; flex: none; }
.sample { height: 27px; margin: 14px 0 0; padding: 0 0 0 9px; border: 1px solid #e3e3e3; box-sizing: border-box; position: relative; min-width: 0; }
.sample legend { padding: 0 1px; margin-left: -4px; line-height: 9px; }
.sample div { line-height: 14px; margin-top: 6px; }
.tl { display: block; height: 12px; margin-top: 11px; line-height: 10px; }
.tinput { height: 18px; border: 1px solid #d6d6d6; box-sizing: border-box; line-height: 16px; padding-left: 3px; background: #fff; color: #444; }
.tbox { height: 127px; border: 1px solid #9b9b9b; border-top: 0; box-sizing: border-box; display: flex; }
.tlist { flex: 1; padding: 2px 0 0 0; overflow: hidden; }
.tlist .li { padding-left: 2px; }
.tbox .sb { width: 15px; padding: 4px 0; justify-content: flex-start; }
.tbox .sb b { width: 15px; height: 26px; background: #cdcdcd; margin-top: 9px; }
.abajo { margin-top: auto; }
.delrow { display: flex; justify-content: flex-end; margin-top: 6px; }
.del { width: 75px; height: 19px; background: #ccc; color: #f0f0f0; text-align: center; line-height: 19px; }
.desc { margin: 13px 0 0; color: #444; }
.dlg-foot { flex: 1; display: flex; justify-content: flex-end; align-items: center; gap: 10px; padding: 2px 5px 0 0; }
.btn { width: 76px; height: 18px; line-height: 16px; text-align: center; background: #e1e1e1; border: 1px solid #adadad; box-sizing: border-box; color: #333; }
.btn.ok { width: 74px; border: 1.500px solid #0078d7; background: #e6e6e6; }
.cursor { position: absolute; left: 329px; top: 370px; }
</style>
